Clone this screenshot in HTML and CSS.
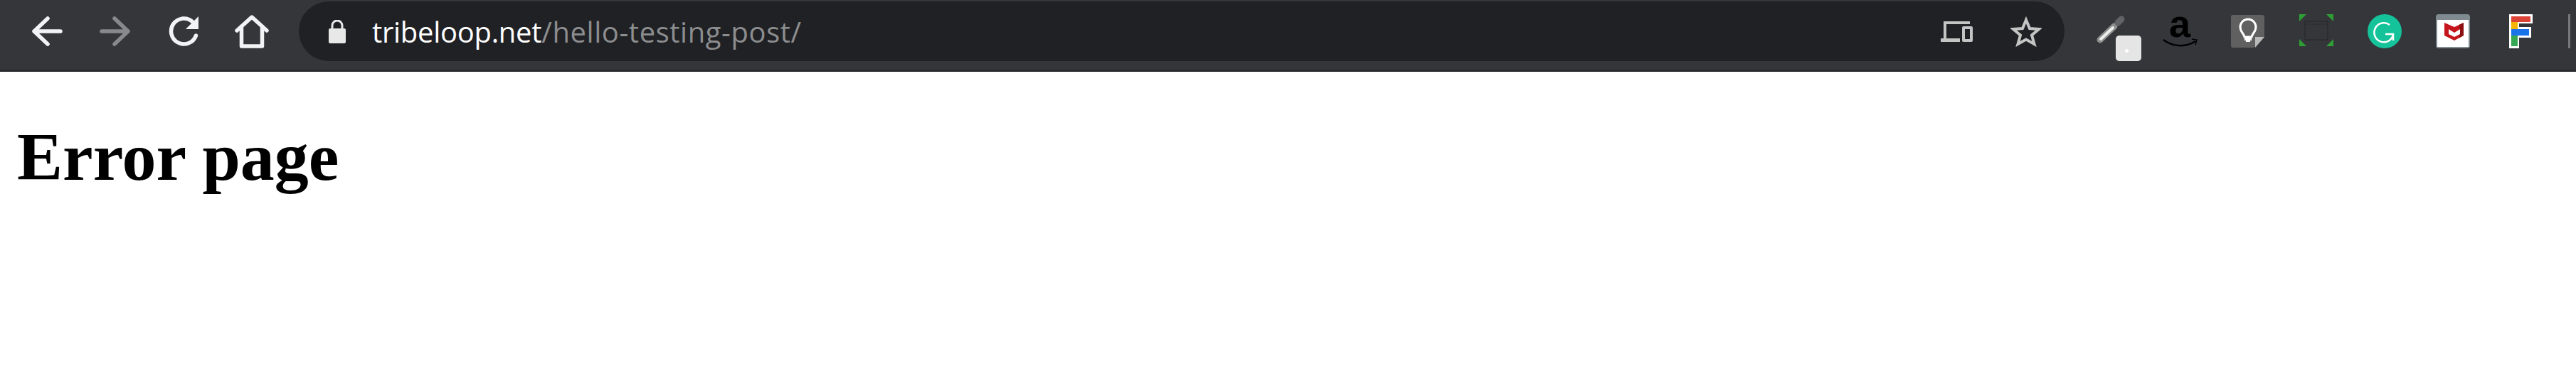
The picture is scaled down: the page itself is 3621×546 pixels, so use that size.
FILE: index.html
```html
<!DOCTYPE html>
<html lang="en">
<head>
    <meta charset="UTF-8">
    <title>Error page</title>
    <link rel="stylesheet" href="styles.css">
</head>
<body>
    <header class="toolbar">
        <nav class="nav-buttons">
            <svg class="icon" viewBox="0 0 48 48"><path class="stroke-light" d="M6 24H43M25 6L6 24L25 42"/></svg>
            <svg class="icon" viewBox="0 0 48 48"><path class="stroke-dim" d="M5 24H42M23 6L42 24L23 42"/></svg>
            <svg class="icon" viewBox="0 0 48 48"><path class="stroke-light" d="M37 11A18 18 0 1 0 41.500 30"/><path class="fill-light" d="M45 3V21H27Z"/></svg>
            <svg class="icon" viewBox="0 0 48 48"><path class="stroke-light" d="M3 23L24 4L45 23M38.500 17V45H9.500V17"/></svg>
        </nav>
        <div class="omnibox">
            <svg class="lock" viewBox="0 0 24 33"><path class="fill-pale" d="M2 12H22A2 2 0 0 1 24 14V31A2 2 0 0 1 22 33H2A2 2 0 0 1 0 31V14A2 2 0 0 1 2 12Z"/><path class="stroke-pale-thin" d="M5 13V8A7 7 0 0 1 19 8V13"/></svg>
            <div class="url"><span class="url-host">tribeloop.net</span><span class="url-path">/hello-testing-post/</span></div>
            <svg class="devices" viewBox="0 0 45 29"><path class="fill-grey" d="M4 0H41V4H8V24H27V29H0V24H4Z"/><path class="fill-grey" fill-rule="evenodd" d="M32 7H43A2 2 0 0 1 45 9V27A2 2 0 0 1 43 29H32A2 2 0 0 1 30 27V9A2 2 0 0 1 32 7ZM34 11V25H41V11Z"/></svg>
            <svg class="star" viewBox="0 0 44 43"><path class="stroke-grey" d="M22 5L27 17L40 18L30 26.500L33.500 39L22 32.500L10.500 39L14 26.500L4 18L17 17Z"/></svg>
        </div>
        <div class="extensions">
            <div class="ext">
                <svg class="icon" viewBox="0 0 48 48"><path d="M8 36L28 17" stroke="#8e8e8e" stroke-width="9" stroke-linecap="round"/><path d="M9 35L26 19" stroke="#ededed" stroke-width="4" stroke-linecap="round"/><path d="M33 12L38 7" stroke="#626366" stroke-width="9" stroke-linecap="round"/></svg>
                <div class="ext-badge"><span class="ext-badge-dot"></span></div>
            </div>
            <svg class="icon" viewBox="0 0 48 48"><text class="amazon-a" x="24" y="32" text-anchor="middle">a</text><path d="M1 36C14 46 32 47 46 38" fill="none" stroke="#000" stroke-width="2.500"/><path d="M41 35L48 36L46 43" fill="none" stroke="#000" stroke-width="1.500"/></svg>
            <svg class="icon" viewBox="0 0 48 48"><path d="M3 1H44A3 3 0 0 1 47 4V32L32 47H3A3 3 0 0 1 0 44V4A3 3 0 0 1 3 1Z" fill="#606060"/><path d="M47 32H34V47Z" fill="#b9b9b9"/><path d="M19 32C18 27 13 25 13 18A11 11 0 0 1 35 18C35 25 30 27 29 32Z" fill="none" stroke="#fff" stroke-width="3"/><path d="M19 33H29V37H27V39H21V37H19Z" fill="#fff"/></svg>
            <svg class="icon" viewBox="0 0 48 48"><rect x="8" y="10" width="32" height="26" fill="none" stroke="#2b2b2b" stroke-width="1.500"/><path d="M8 14H40" stroke="#2b2b2b"/><path d="M0 0H10L0 10ZM48 0V10L38 0ZM0 45V35L10 45ZM48 45H38L48 35Z" fill="#2e9f35"/></svg>
            <svg class="icon" viewBox="0 0 48 48"><circle cx="24" cy="24" r="24" fill="#15c39a"/><path d="M31 15A13.500 13.500 0 1 0 36 29" fill="none" stroke="#fff" stroke-width="2.500"/><path d="M25 28H36V37" fill="none" stroke="#fff" stroke-width="2.500"/></svg>
            <svg class="icon" viewBox="0 0 48 48"><rect width="48" height="48" rx="4" fill="#7f8b90"/><rect x="2" y="8" width="44" height="38" fill="#fff"/><path d="M12 12L26 18L39 12V30L26 37L12 30Z" fill="#c4161c"/><path d="M39 12L33 14.700V33.300L39 30Z" fill="#8c0f12"/><path d="M18 21L26 26L34 21V28L26 32L18 28Z" fill="#fff"/></svg>
            <svg class="icon" viewBox="0 0 48 48"><path d="M7 0H40V13H21V18H38V33H21V48H7Z" fill="#fff"/><rect x="10" y="3" width="27" height="8" fill="#db4437"/><rect x="10" y="11" width="9" height="10" fill="#f4b400"/><rect x="10" y="21" width="25" height="9" fill="#1a73e8"/><rect x="10" y="30" width="9" height="15" fill="#34a853"/></svg>
            <div class="ext-divider"></div>
        </div>
    </header>
    <h1 class="title">Error page</h1>
</body>
</html>
```

FILE: styles.css
```css
body {
    margin: 0;
    background-color: white;
    color: black;
    font-family: "Liberation Serif", serif;
}
.toolbar {
    display: flex;
    align-items: center;
    height: 84px;
    padding: 2px 8px 12px 42px;
    background-color: #35363a;
    border-bottom: 3px solid #28292c;
}
.nav-buttons {
    display: flex;
    gap: 48px;
    margin-right: 42px;
}
.icon {
    display: block;
    flex: none;
    width: 48px;
    height: 48px;
    overflow: visible;
}
.stroke-light, .stroke-dim {
    fill: none;
    stroke-width: 5.5px;
    stroke-linecap: round;
    stroke-linejoin: round;
}
.stroke-light {
    stroke: #f1f3f4;
}
.stroke-dim {
    stroke: #88898c;
}
.fill-light {
    fill: #f1f3f4;
}
.fill-pale {
    fill: #e8e8e8;
}
.stroke-pale-thin {
    fill: none;
    stroke: #e8e8e8;
    stroke-width: 3px;
}
.fill-grey {
    fill: #c4c4c4;
}
.stroke-grey {
    fill: none;
    stroke: #c4c4c4;
    stroke-width: 4px;
}
.omnibox {
    flex: 1;
    display: flex;
    align-items: center;
    height: 84px;
    padding: 0 32px 0 42px;
    background-color: #202124;
    border-radius: 42px;
}
.lock {
    flex: none;
    width: 24px;
    height: 33px;
    margin-right: 37px;
}
.url {
    flex: 1;
    font-family: "Open Sans", sans-serif;
    font-size: 40px;
}
.url-host {
    color: white;
    letter-spacing: -0.3px;
}
.url-path {
    color: #8c8d8f;
    letter-spacing: 0.55px;
}
.devices {
    flex: none;
    width: 45px;
    height: 29px;
    margin-right: 53px;
}
.star {
    flex: none;
    width: 44px;
    height: 43px;
}
.extensions {
    display: flex;
    align-items: center;
    gap: 48px;
    margin-left: 42px;
}
.ext {
    position: relative;
    width: 48px;
    height: 48px;
}
.ext-badge {
    position: absolute;
    left: 30px;
    top: 30px;
    display: flex;
    align-items: center;
    justify-content: center;
    width: 36px;
    height: 36px;
    background-color: #e5e5e5;
    border-radius: 5px;
}
.ext-badge-dot {
    width: 5px;
    height: 5px;
    margin: 6px 6px 0 0;
    background-color: white;
    border-radius: 50%;
}
.amazon-a {
    font-family: "Liberation Sans", sans-serif;
    font-weight: bold;
    font-size: 54px;
    fill: #000;
}
.ext-divider {
    width: 3px;
    height: 48px;
    margin-left: -6px;
    background-color: #76777a;
}
.title {
    margin: 64px 0 0 24px;
    font-size: 96px;
    font-weight: bold;
}
```
